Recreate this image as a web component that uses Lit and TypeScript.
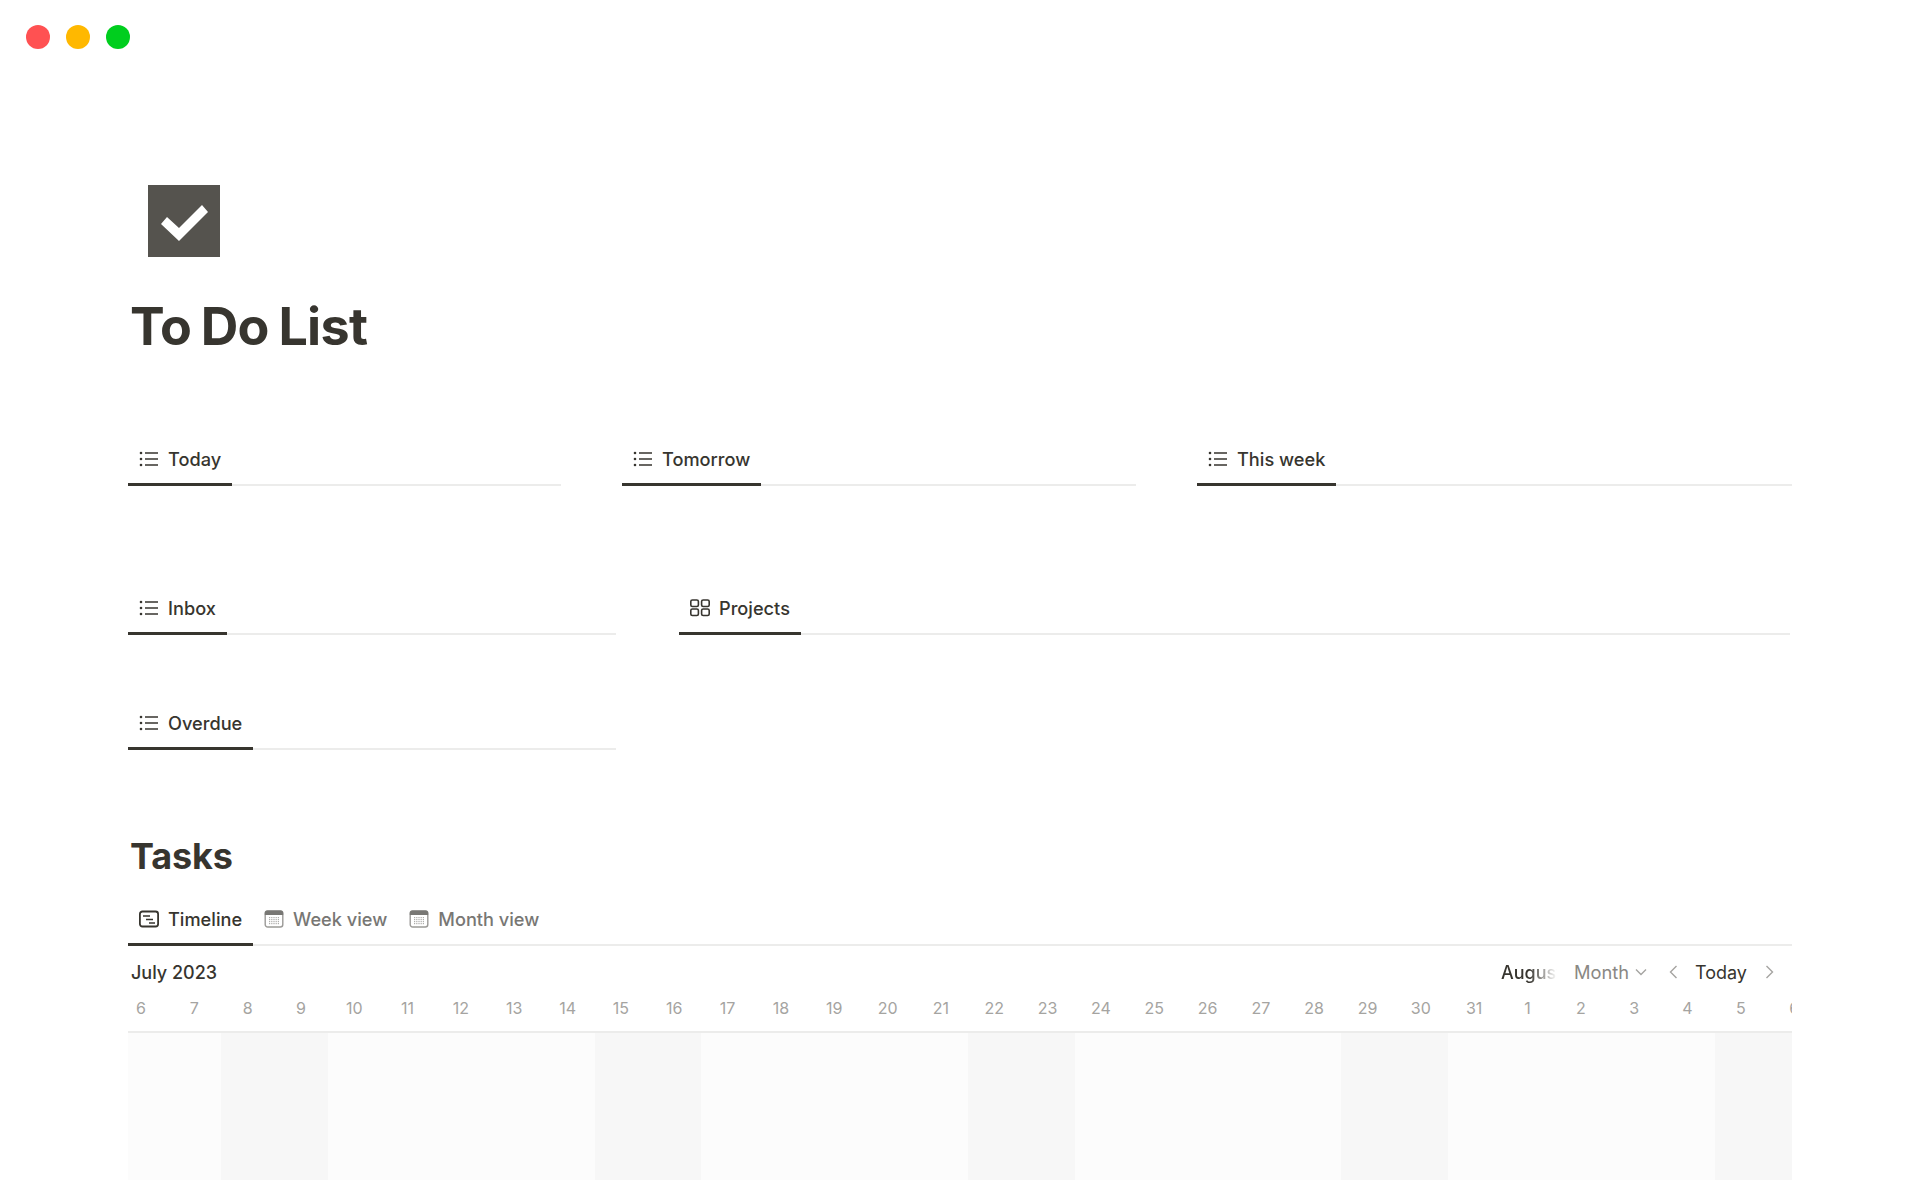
import { LitElement, html, css, svg } from "lit";
import { customElement } from "lit/decorators.js";

const listIcon = html`<svg class="ico" width="20" height="20" viewBox="0 0 20 20"><g fill="currentColor"><circle cx="2" cy="4" r="1.3"/><circle cx="2" cy="10" r="1.3"/><circle cx="2" cy="16" r="1.3"/></g><path d="M6 4H19M6 10H19M6 16H19" stroke="currentColor" stroke-width="1.6" fill="none"/></svg>`;
const galleryIcon = html`<svg class="ico" width="20" height="20" viewBox="0 0 20 20"><g fill="none" stroke="currentColor" stroke-width="1.6"><rect x="0.8" y="2" width="7.6" height="6.5" rx="1.6"/><rect x="11.6" y="2" width="7.6" height="6.5" rx="1.6"/><rect x="0.8" y="11" width="7.6" height="6.5" rx="1.6"/><rect x="11.6" y="11" width="7.6" height="6.5" rx="1.6"/></g></svg>`;
const timelineIcon = html`<svg class="ico" width="20" height="20" viewBox="0 0 20 20"><rect x="0.9" y="2.5" width="18.2" height="15" rx="2.5" fill="none" stroke="currentColor" stroke-width="1.8"/><path d="M4 7H11M7 10.5H14M10 14H16" stroke="currentColor" stroke-width="1.4" fill="none"/></svg>`;
const dots = [0, 1, 2, 3].flatMap((r) =>
  [0, 1, 2, 3, 4].map((c) => svg`<rect x="${5 + c * 2.2}" y="${8 + r * 2}" width="1.2" height="1.2"/>`)
);
const calIcon = html`<svg class="ico" width="20" height="20" viewBox="0 0 20 20"><rect x="1.2" y="2" width="17.6" height="16" rx="2.5" fill="none" stroke="#9b9a97" stroke-width="1.4"/><path d="M0.8 6V4A2.5 2.5 0 0 1 3.3 1.5H16.7A2.5 2.5 0 0 1 19.2 4V6Z" fill="currentColor"/><g fill="currentColor" opacity=".6">${dots}</g></svg>`;

const days = [
  ...Array.from({ length: 26 }, (_, i) => i + 6),
  1, 2, 3, 4, 5, 6,
];
const bands = [
  [93.3, false],
  [106.7, true], [266.7, false],
  [106.7, true], [266.7, false],
  [106.7, true], [266.7, false],
  [106.7, true], [266.7, false],
  [78, true],
] as [number, boolean][];

@customElement("app-root")
export class AppRoot extends LitElement {
  static styles = css`
    :host { display: block; width: 1920px; height: 1200px; background: #fff; font-family: Inter, "Liberation Sans", sans-serif; color: #37352f; overflow: hidden; }
    .traffic { display: flex; gap: 16px; padding: 25px 0 0 26px; }
    .traffic i { width: 24px; height: 24px; border-radius: 50%; display: block; }
    .red { background: #ff5152; } .amber { background: #ffb800; } .green { background: #00ce1e; }
    .page { padding: 0 128px; }
    .emoji { width: 72px; height: 72px; margin: 136px 0 0 20px; display: block; }
    h1 { margin: 39px 0 0 2px; font-size: 52px; line-height: 62px; font-weight: 700; letter-spacing: -0.7px; word-spacing: -2px; }
    .row { display: grid; column-gap: 61px; }
    .r1 { grid-template-columns: 433px 514px 595px; margin-top: 79px; }
    .r2 { grid-template-columns: 488px 1111px; column-gap: 63px; margin-top: 100px; }
    .r3 { grid-template-columns: 488px; margin-top: 66px; }
    .bar { display: flex; align-items: flex-end; }
    .tab { display: flex; align-items: center; gap: 9px; height: 44px; padding: 0 11px 2px; border-bottom: 3px solid #37352f; font-size: 18.2px; font-weight: 500; color: #37352f; white-space: nowrap; }
    .tab.off { border-bottom: 2px solid #ececeb; color: #787774; padding: 0 11px 3px; }
    .fill { flex: 1; border-bottom: 2px solid #ececeb; }
    .ico { flex: none; display: block; }
    h2 { margin: 83px 0 0 2px; font-size: 36px; line-height: 46px; font-weight: 700; letter-spacing: -0.15px; }
    .tabs { margin-top: 18px; }
    .head { display: flex; align-items: center; height: 44px; margin-top: 4px; padding-left: 3px; font-size: 18px; font-weight: 500; }
    .controls { margin-left: auto; display: flex; align-items: center; font-weight: 400; }
    .aug { width: 56px; overflow: hidden; white-space: nowrap; font-weight: 500; -webkit-mask-image: linear-gradient(90deg, #000 50%, transparent); mask-image: linear-gradient(90deg, #000 50%, transparent); }
    .month { color: #8a8884; margin-left: 17px; font-size: 18.3px; }
    .chev { margin-left: 6px; display: block; }
    .prev { margin-left: 22px; }
    .today { margin-left: 17px; }
    .next { margin: 0 18.5px 0 17.5px; }
    .dayclip { overflow: hidden; border-bottom: 2px solid #ececeb; height: 37px; }
    .days { display: flex; margin-left: -13.7px; }
    .days span { flex: none; width: 53.33px; text-align: center; font-size: 16px; line-height: 28px; color: #a5a4a1; }
    .grid { display: flex; height: 147px; overflow: hidden; }
    .band { flex: none; background: #fcfcfc; }
    .band.we { background: #f7f7f7; }
  `;

  private tab(icon: unknown, label: string) {
    return html`<div class="bar"><div class="tab">${icon}<span>${label}</span></div><div class="fill"></div></div>`;
  }

  render() {
    return html`
      <div class="traffic"><i class="red"></i><i class="amber"></i><i class="green"></i></div>
      <div class="page">
        <svg class="emoji" viewBox="0 0 72 72"><rect width="72" height="72" fill="#55534e"/><polygon points="13,39 19,32 31,43 54,20 60,27 31,56" fill="#fff"/></svg>
        <h1>To Do List</h1>
        <div class="row r1">${this.tab(listIcon, "Today")}${this.tab(listIcon, "Tomorrow")}${this.tab(listIcon, "This week")}</div>
        <div class="row r2">${this.tab(listIcon, "Inbox")}${this.tab(galleryIcon, "Projects")}</div>
        <div class="row r3">${this.tab(listIcon, "Overdue")}</div>
        <h2>Tasks</h2>
        <div class="bar tabs">
          <div class="tab">${timelineIcon}<span>Timeline</span></div>
          <div class="tab off">${calIcon}<span>Week view</span></div>
          <div class="tab off">${calIcon}<span>Month view</span></div>
          <div class="fill"></div>
        </div>
        <div class="head">
          <span>July 2023</span>
          <div class="controls">
            <span class="aug">August 2023</span>
            <span class="month">Month</span>
            <svg class="chev" width="12" height="8" viewBox="0 0 12 8"><path d="M1 1.5L6 6.5L11 1.5" fill="none" stroke="#a5a4a1" stroke-width="1.4"/></svg>
            <svg class="prev" width="9" height="14" viewBox="0 0 9 14"><path d="M7.5 1L1.5 7L7.5 13" fill="none" stroke="#a5a4a1" stroke-width="1.4"/></svg>
            <span class="today">Today</span>
            <svg class="next" width="9" height="14" viewBox="0 0 9 14"><path d="M1.5 1L7.5 7L1.5 13" fill="none" stroke="#a5a4a1" stroke-width="1.4"/></svg>
          </div>
        </div>
        <div class="dayclip"><div class="days">${days.map((d) => html`<span>${d}</span>`)}</div></div>
        <div class="grid">${bands.map(([w, we]) => html`<div class="band ${we ? "we" : ""}" style="width:${w}px"></div>`)}</div>
      </div>
    `;
  }
}
